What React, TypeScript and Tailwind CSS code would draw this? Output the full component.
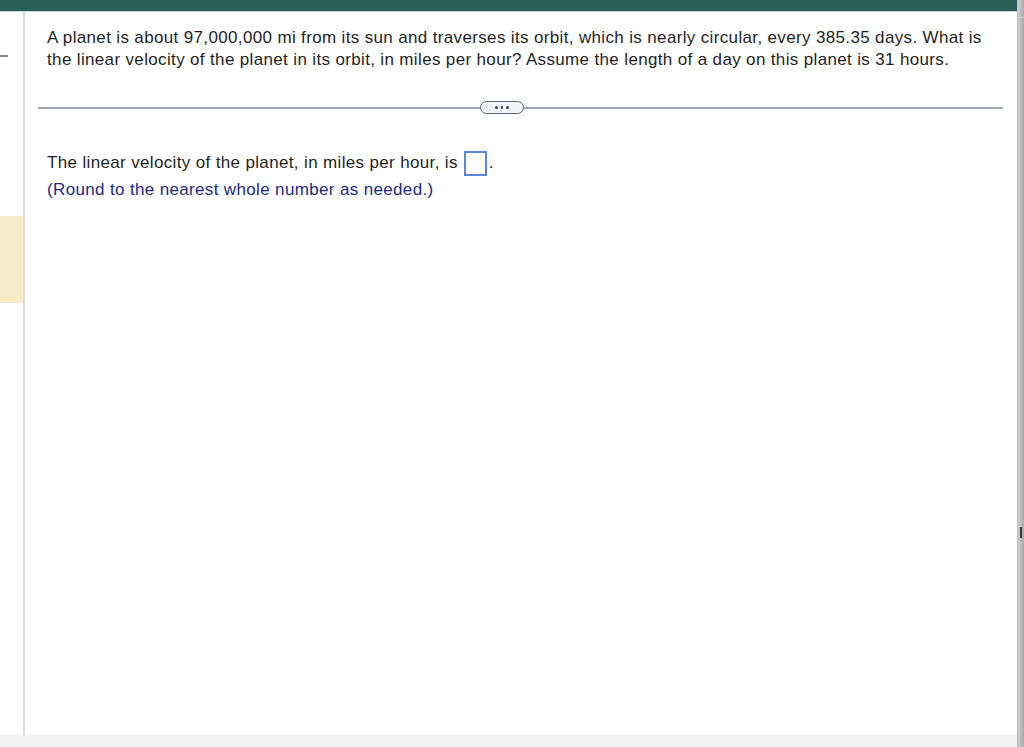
import React from "react";

export default function App() {
  return (
    <div className="w-[1024px] h-[747px] overflow-hidden bg-white flex font-['Liberation_Sans',Arial,sans-serif]">
      <div className="flex-1 flex flex-col">
        <div className="h-[11px] bg-[#2a5f56]" />
        <div className="h-[1px] bg-[#c9d6e3]" />
        <div className="flex-1 flex">
          {/* left rail */}
          <div className="w-[23px] flex flex-col">
            <div className="h-[43px]" />
            <div className="h-[2px] w-[8px] bg-[#8a8a8a]" />
            <div className="h-[159px]" />
            <div className="h-[87px] bg-[#f7ecc7]" />
          </div>
          <div className="w-[2px] bg-[#d7dce6]" />
          {/* content */}
          <div className="flex-1 flex flex-col">
            <div className="pl-[22px] pr-[28px] pt-[15px] text-[17px] tracking-[0.35px] leading-[22px] text-[#1f1f1f]">
              A planet is about 97,000,000 mi from its sun and traverses its orbit, which is nearly circular, every 385.35 days. What is the linear velocity of the planet in its orbit, in miles per hour? Assume the length of a day on this planet is 31 hours.
            </div>
            <div className="relative ml-[13px] mr-[14px] mt-[36px] h-[2px] bg-[#a3a7b1]">
              <div className="absolute left-[442px] top-[-6px] w-[44px] h-[13px] rounded-full border-[1.5px] border-[#5d6470] bg-[#f1f3f6] flex items-center justify-center gap-[3px]">
                <span className="w-[2.5px] h-[2.5px] rounded-full bg-[#3b4250]" />
                <span className="w-[2.5px] h-[2.5px] rounded-full bg-[#3b4250]" />
                <span className="w-[2.5px] h-[2.5px] rounded-full bg-[#3b4250]" />
              </div>
            </div>
            <div className="pl-[22px] mt-[41px] text-[17px] tracking-[0.35px] text-[#1f1f1f] flex items-center h-[26px]">
              <span>The linear velocity of the planet, in miles per hour, is</span>
              <span className="inline-block ml-[6px] w-[23px] h-[25px] border-[2px] border-[#5b86da]" />
              <span className="ml-[2px]">.</span>
            </div>
            <div className="pl-[22px] text-[17px] tracking-[0.35px] leading-[22px] text-[#1c2a8a] mt-[3px]">
              (Round to the nearest whole number as needed.)
            </div>
            <div className="flex-1" />
          </div>
        </div>
        <div className="h-[12px] bg-[#f1f1f1]" />
      </div>
      {/* right scrollbar strip */}
      <div className="w-[7px] flex flex-col bg-gradient-to-r from-[#d0d0d0] to-[#a8a8a8] border-l border-[#bdbdbd]">
        <div className="h-[17px]" />
        <div className="h-[1px] bg-[#c6c6c6]" />
        <div className="h-[509px]" />
        <div className="ml-[2px] w-[2px] h-[11px] bg-[#3a3a3a]" />
      </div>
    </div>
  );
}
